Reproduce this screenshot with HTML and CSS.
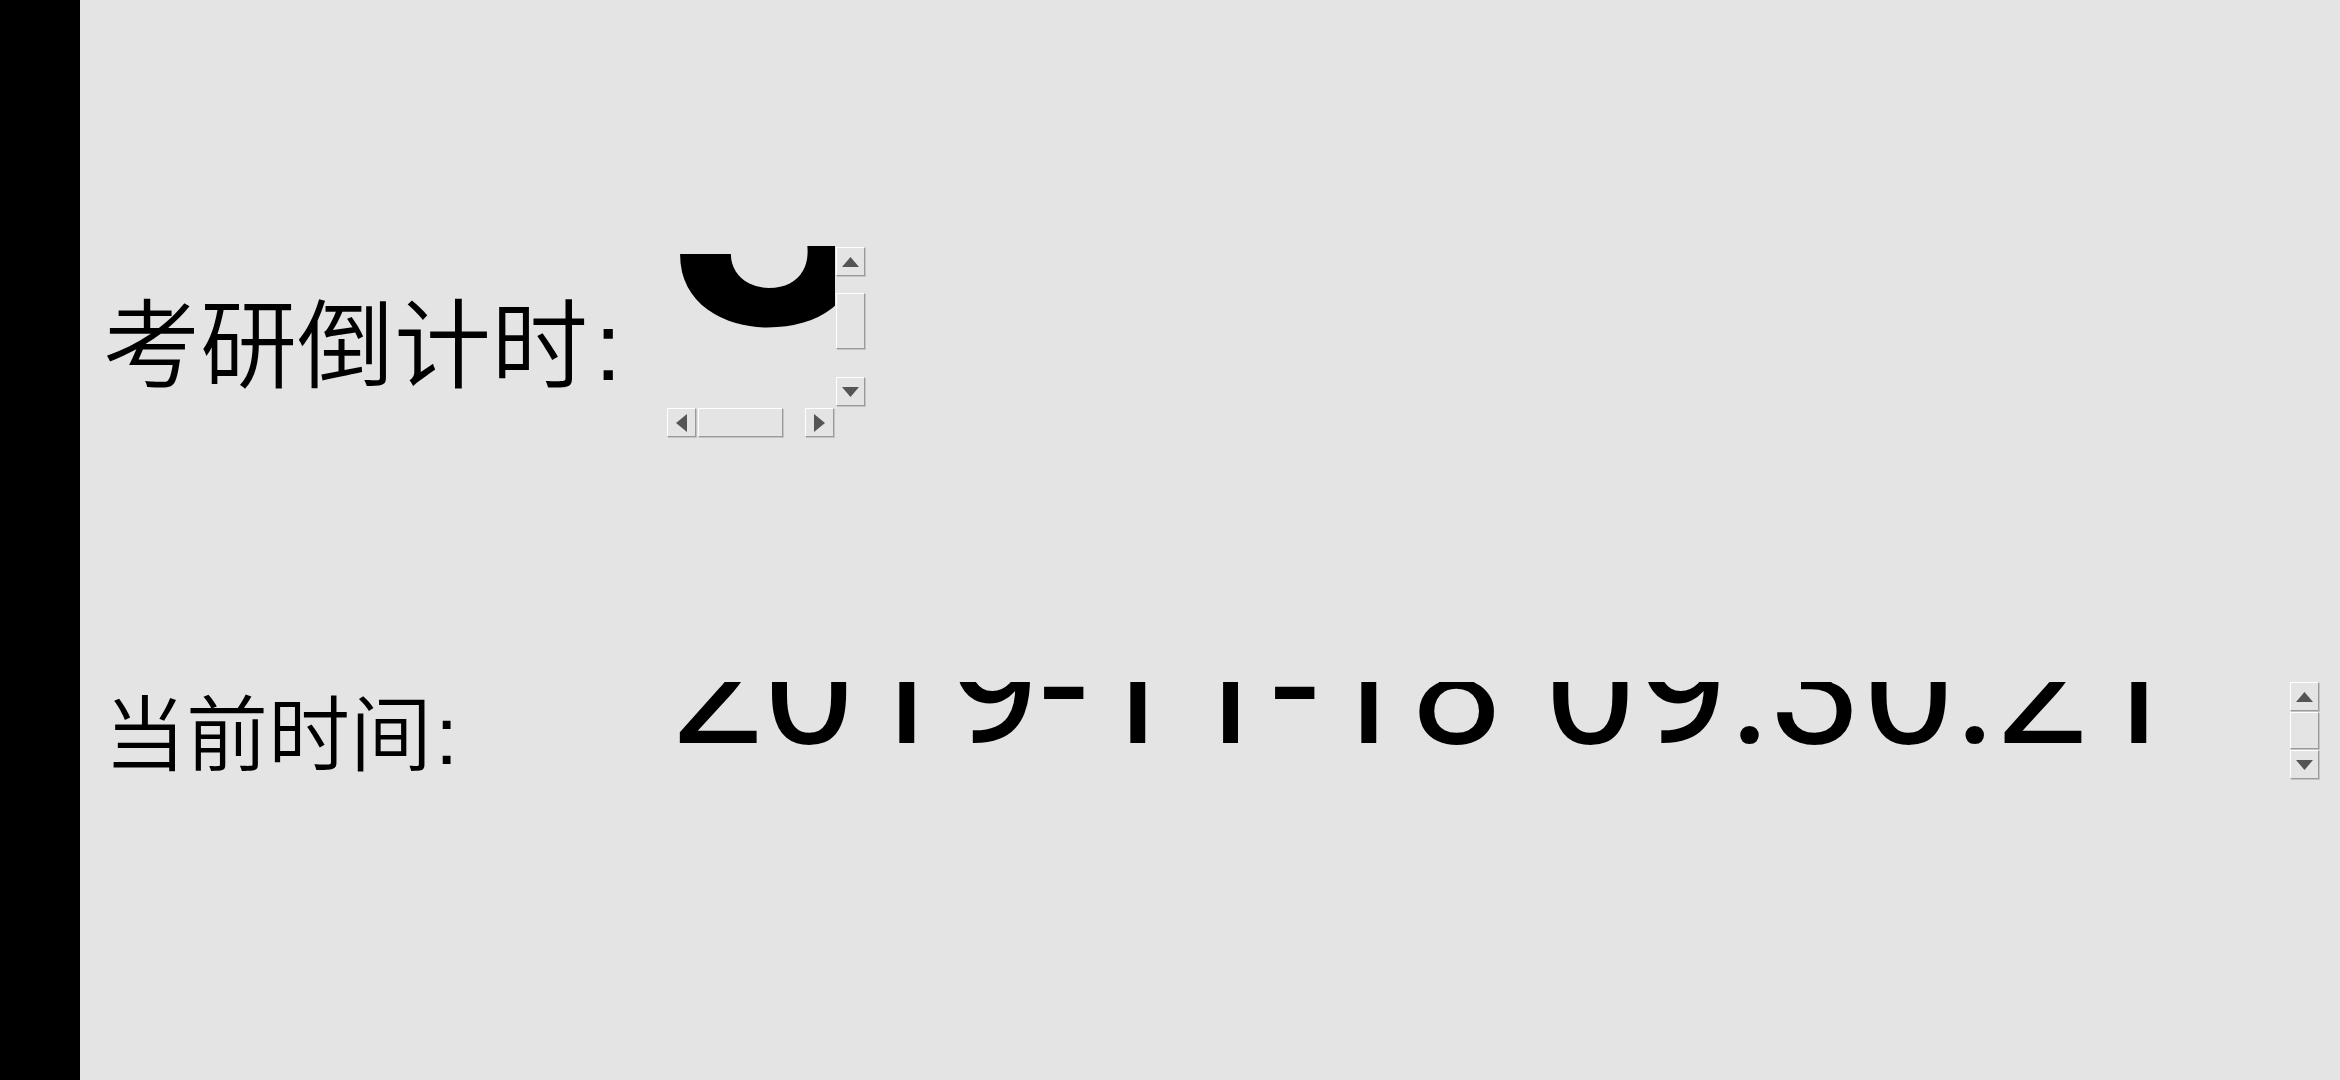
FILE: index.html
```html
<!DOCTYPE html>
<html lang="zh-CN">
<head>
<meta charset="utf-8">
<title>考研倒计时</title>
<link rel="stylesheet" href="styles.css">
</head>
<body>
<div class="screen">
  <div class="cutout"></div>
  <main class="app">
    <div class="label label-lg">考研倒计时<span class="colon">:</span></div>
    <div class="textbox countdown">
      <div class="view"><div class="content big">33</div></div>
      <div class="vscroll">
        <div class="btn btn-v btn-first"><svg class="arr-v" viewBox="0 0 17 10"><polygon points="8.5,0 17,10 0,10"/></svg></div>
        <div class="thumb thumb-v1"></div>
        <div class="btn btn-v btn-down1"><svg class="arr-v" viewBox="0 0 17 10"><polygon points="0,0 17,0 8.5,10"/></svg></div>
      </div>
      <div class="hscroll">
        <div class="btn btn-h"><svg class="arr-h" viewBox="0 0 11 18"><polygon points="0,9 11,0 11,18"/></svg></div>
        <div class="thumb thumb-h"></div>
        <div class="btn btn-h btn-right"><svg class="arr-h" viewBox="0 0 11 18"><polygon points="0,0 11,9 0,18"/></svg></div>
      </div>
      <div class="corner"></div>
    </div>

    <div class="label label-md">当前时间<span class="colon">:</span></div>
    <div class="textbox clock">
      <div class="view"><div class="content time">2019-11-18 09:30:21</div></div>
      <div class="vscroll">
        <div class="btn btn-v"><svg class="arr-v" viewBox="0 0 17 10"><polygon points="8.5,0 17,10 0,10"/></svg></div>
        <div class="thumb thumb-v2"></div>
        <div class="btn btn-v btn-down2"><svg class="arr-v" viewBox="0 0 17 10"><polygon points="0,0 17,0 8.5,10"/></svg></div>
      </div>
    </div>
  </main>
</div>
</body>
</html>
```
FILE: styles.css
```css
html, body {
  margin: 0;
  padding: 0;
}

body {
  width: 2340px;
  height: 1080px;
  overflow: hidden;
  background: #e4e4e4;
  color: #000;
}

.screen {
  display: flex;
  height: 1080px;
}

.cutout {
  width: 80px;
  flex: none;
  background: #000;
}

.app {
  flex: 1;
  display: grid;
  grid-template-columns: 564px 1652px;
  grid-template-rows: 191px 98px;
  row-gap: 245px;
  padding: 246px 0 0 23px;
  align-items: center;
  align-content: start;
}

.label {
  font-family: "Noto Sans CJK SC", sans-serif;
  font-weight: 350;
  line-height: 1;
  white-space: nowrap;
}

.colon {
  font-family: "Liberation Sans", sans-serif;
  font-weight: 400;
  margin-left: 0.07em;
}

.label-lg {
  font-size: 97px;
  margin-top: 0;
}

.label-md {
  font-size: 82px;
  margin-top: 2px;
  padding-left: 1px;
}

.label-md .colon {
  margin-left: 0.04em;
}

.textbox {
  display: grid;
  justify-self: start;
  align-self: stretch;
}

.countdown {
  grid-template-columns: 168px 30px;
  grid-template-rows: 161px 30px;
}

.clock {
  grid-template-columns: 1622px 30px;
  grid-template-rows: 98px;
}

.view {
  overflow: hidden;
}

.content {
  font-family: Roboto, "Noto Sans CJK SC", sans-serif;
  white-space: nowrap;
}

.big {
  font-size: 360px;
  font-weight: 700;
  line-height: 360px;
  margin-top: -225px;
  padding-left: 2px;
}

.time {
  font-size: 165px;
  font-weight: 400;
  line-height: 165px;
  margin-top: -78px;
  padding-left: 3px;
}

.vscroll {
  display: flex;
  flex-direction: column;
  padding-left: 1px;
}

.hscroll {
  display: flex;
  padding-top: 1px;
}

.btn,
.thumb {
  box-sizing: border-box;
  background: #e4e4e4;
  border-top: 1px solid #ffffff;
  border-left: 1px solid #ffffff;
  border-right: 1px solid #9a9a9a;
  border-bottom: 1px solid #9a9a9a;
  box-shadow: 1px 1px 0 #c4c4c4;
}

.btn {
  display: flex;
  align-items: center;
  justify-content: center;
  flex: none;
}

.btn-v {
  width: 29px;
  height: 29px;
}

.btn-h {
  width: 29px;
  height: 29px;
}

.arr-v {
  width: 17px;
  height: 10px;
  fill: #555555;
}

.arr-h {
  width: 11px;
  height: 18px;
  fill: #555555;
}

.btn-first {
  margin-top: 1px;
}

.thumb-v1 {
  width: 29px;
  height: 56px;
  margin-top: 17px;
  flex: none;
}

.btn-down1 {
  margin-top: 28px;
}

.thumb-h {
  width: 85px;
  height: 29px;
  margin-left: 2px;
  flex: none;
}

.btn-right {
  margin-left: 22px;
}

.thumb-v2 {
  width: 29px;
  height: 37px;
  margin-top: 1px;
  flex: none;
}

.btn-down2 {
  margin-top: 1px;
}
```
